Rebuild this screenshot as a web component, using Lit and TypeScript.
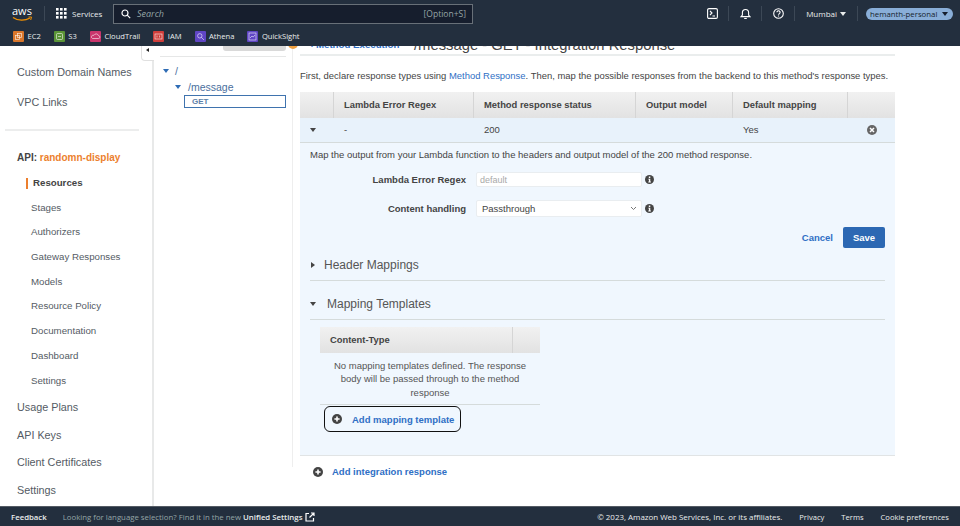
import { LitElement, html, css, svg } from 'lit';
import { customElement } from 'lit/decorators.js';

const favorites = [
  { name: 'EC2', color: '#d9762b', glyph: svg`<rect x="2.5" y="4.5" width="4" height="4"/><rect x="4.5" y="2.5" width="4" height="4"/>` },
  { name: 'S3', color: '#5a9437', glyph: svg`<rect x="2.5" y="2.5" width="6" height="6" rx="1"/><path d="M4 5.5h3"/>` },
  { name: 'CloudTrail', color: '#c9356c', glyph: svg`<path d="M2.5 7.5h6a1.4 1.4 0 0 0 0-2.8 2.4 2.4 0 0 0-4.5-.4 1.7 1.7 0 0 0-1.5 3.2z"/>` },
  { name: 'IAM', color: '#cf3d3a', glyph: svg`<rect x="2" y="3" width="7" height="5"/><path d="M4 4.5v2M6.5 4.5v2"/>` },
  { name: 'Athena', color: '#5f45c4', glyph: svg`<circle cx="4.8" cy="4.8" r="2.2"/><path d="M6.4 6.4 9 9"/>` },
  { name: 'QuickSight', color: '#5f45c4', glyph: svg`<rect x="2" y="2" width="7" height="7"/><path d="M3 7l2-2 1.2 1L8 4"/>` },
];

const apiLinks = ['Stages', 'Authorizers', 'Gateway Responses', 'Models', 'Resource Policy', 'Documentation', 'Dashboard', 'Settings'];
const bottomLinks = ['Usage Plans', 'API Keys', 'Client Certificates', 'Settings'];

const plusIcon = svg`<circle cx="5" cy="5" r="5" fill="#444"/><path d="M5 2.4v5.2M2.4 5h5.2" stroke="#fff" stroke-width="1.6"/>`;
const infoIcon = svg`<circle cx="4.5" cy="4.5" r="4.5" fill="#444"/><rect x="3.8" y="1.5" width="1.5" height="1.5" fill="#fff"/><path d="M3.3 3.8h2v2.8h.6v.8H3.3v-.8h.6v-2h-.6z" fill="#fff"/>`;

@customElement('app-root')
export class AppRoot extends LitElement {
  static styles = css`
    :host {
      display: flex;
      flex-direction: column;
      width: 960px;
      height: 526px;
      overflow: hidden;
      font-family: 'Liberation Sans', Arial, sans-serif;
      color: #444;
      background: #fff;
    }

    /* top bar */
    .topbar {
      flex: none;
      height: 46px;
      background: #232f3e;
      color: #eaeded;
      box-sizing: border-box;
      font-family: 'Open Sans', 'Noto Sans', sans-serif;
      position: relative;
      z-index: 1;
    }
    .nav {
      height: 27px;
      display: flex;
      align-items: center;
      padding: 0 7px 0 12px;
    }
    .logo {
      width: 22px;
      height: 19px;
      flex: none;
    }
    .sep {
      width: 1px;
      height: 15px;
      background: #3c4856;
      flex: none;
    }
    .sep.first {
      margin-left: 10px;
    }
    .services {
      display: flex;
      align-items: center;
      gap: 5px;
      margin-left: 11px;
      width: 57px;
      font-size: 8px;
      flex: none;
    }
    .search {
      width: 360px;
      height: 20px;
      box-sizing: border-box;
      background: #161e2d;
      border: 1px solid #687078;
      display: flex;
      align-items: center;
      padding: 0 6px 0 7px;
      gap: 6px;
      font-size: 8.5px;
      color: #95a5a6;
      flex: none;
    }
    .search em {
      flex: 1;
      font-size: 9px;
    }
    .nav-right {
      margin-left: auto;
      display: flex;
      align-items: center;
      font-size: 8px;
    }
    .ico {
      width: 32px;
      display: flex;
      justify-content: center;
    }
    .region {
      display: flex;
      align-items: center;
      gap: 3px;
      padding: 0 11px;
    }
    .caret {
      display: inline-block;
      width: 0;
      height: 0;
      border-left: 3px solid transparent;
      border-right: 3px solid transparent;
      border-top: 4px solid currentColor;
    }
    .account {
      margin-left: 8px;
      height: 12px;
      width: 87px;
      box-sizing: border-box;
      border-radius: 6px;
      background: #89aed8;
      color: #161e2d;
      display: flex;
      align-items: center;
      justify-content: space-between;
      padding: 0 5px 0 4px;
      font-size: 7.8px;
    }
    .favs {
      height: 18px;
      display: flex;
      align-items: center;
      padding-left: 13px;
      gap: 13px;
      font-size: 7.6px;
    }
    .fav {
      display: flex;
      align-items: center;
      gap: 3.5px;
    }
    .fav svg {
      display: block;
      width: 11px;
      height: 11px;
      border-radius: 1px;
      fill: none;
      stroke: #fff;
      stroke-width: 0.7;
      stroke-opacity: 0.8;
    }

    .main {
      flex: 1;
      min-height: 0;
      display: flex;
      align-items: flex-start;
      overflow: hidden;
    }

    /* side nav */
    .side {
      flex: none;
      width: 154px;
      height: 100%;
      box-sizing: border-box;
      border-right: 2px solid #e8e9e9;
      font-size: 10.8px;
      color: #545b64;
    }
    .side a {
      display: block;
      color: inherit;
    }
    .side .top {
      padding-left: 17px;
      height: 30px;
      line-height: 30px;
    }
    .side .top.cut {
      margin-top: -19px;
    }
    .side .big {
      padding-left: 17px;
      height: 27.6px;
      line-height: 18px;
    }
    .side hr {
      border: 0;
      border-top: 2px solid #eceded;
      margin: 12px 13px 19px 5px;
    }
    .api-title {
      padding-left: 17px;
      font-size: 10px;
      font-weight: 700;
      color: #444;
      height: 25px;
      line-height: 15px;
    }
    .api-title span {
      color: #ec7f2e;
    }
    .side .sub {
      height: 24.7px;
      line-height: 16px;
      padding-left: 31px;
      font-size: 9.7px;
    }
    .side .sub.on {
      font-weight: 700;
      color: #444;
      padding-left: 33px;
      position: relative;
    }
    .side .sub.on::before {
      content: '';
      position: absolute;
      left: 25.5px;
      top: 2.5px;
      width: 2px;
      height: 11px;
      background: #ec7f2e;
    }
    .side .gap {
      height: 1px;
    }

    /* resource tree */
    .tree {
      flex: none;
      width: 139px;
      height: 421px;
      box-sizing: border-box;
      border-right: 1px solid #eee;
      position: relative;
      font-size: 10.5px;
      color: #4a6f9e;
      padding: 0 6px 0 6px;
    }
    .tree-head {
      display: flex;
      justify-content: space-between;
      align-items: flex-start;
      height: 21px;
      box-sizing: border-box;
      margin-top: -10px;
      border-bottom: 1.5px solid #e6e7e7;
      font-size: 9.5px;
      font-weight: 700;
      line-height: 13px;
      color: #777;
    }
    .tree-head i {
      display: block;
      width: 63px;
      height: 15px;
      background: #d9d9d9;
      border-radius: 0 0 3px 3px;
    }
    .collapse {
      position: absolute;
      left: -13px;
      top: 0;
      width: 13px;
      height: 15px;
      box-sizing: border-box;
      background: #fff;
      border-left: 1px solid #e0e0e0;
      border-bottom: 1px solid #e0e0e0;
      border-radius: 0 0 0 4px;
    }
    .collapse::after {
      content: '';
      position: absolute;
      left: 4px;
      top: 2px;
      border-top: 2.5px solid transparent;
      border-bottom: 2.5px solid transparent;
      border-right: 3px solid #222;
    }
    .dot {
      position: absolute;
      right: -6px;
      top: -7px;
      width: 10px;
      height: 10px;
      border-radius: 50%;
      background: #f0a040;
    }
    .tree .row {
      display: flex;
      align-items: center;
      gap: 6px;
      height: 16px;
      padding-left: 3px;
    }
    .tree .row.root {
      margin-top: 6px;
    }
    .tree .row.deep {
      margin-left: 12px;
      gap: 7px;
    }
    .tree .caret {
      color: #2e6cb5;
    }
    .tree .get {
      margin-left: 24px;
      height: 13px;
      box-sizing: border-box;
      border: 1px solid #3f73ae;
      font-size: 8px;
      font-weight: 700;
      line-height: 11px;
      padding-left: 7px;
      color: #5d7fa8;
    }

    /* content */
    .content {
      flex: none;
      width: 595px;
      margin-left: 7px;
    }
    .title {
      display: flex;
      align-items: center;
      height: 20px;
      margin-top: -12px;
      padding-top: 1px;
      box-sizing: border-box;
      font-size: 14.8px;
      color: #444;
    }
    .back {
      width: 114px;
      flex: none;
      box-sizing: border-box;
      padding-left: 10px;
      font-size: 9.7px;
      font-weight: 700;
      color: #2f6fc5;
    }
    .rule {
      height: 2px;
      background: #eaeded;
    }
    .intro {
      font-size: 9.45px;
      line-height: 14px;
      margin: 13px 0 9px;
      white-space: nowrap;
      color: #444;
    }
    .link {
      color: #2f6fc5;
    }
    .grid {
      display: grid;
      grid-template-columns: 34px 140px 162px 97px 115px 47px;
    }
    .head {
      height: 26px;
      background: linear-gradient(#f1f1f1, #e2e2e2);
      border-right: 1px solid #d5d5d5;
      box-sizing: border-box;
      font-size: 9.4px;
      font-weight: 700;
      line-height: 26px;
      padding-left: 10px;
      color: #444;
    }
    .head.last {
      border-right: 0;
    }
    .cell {
      height: 25px;
      line-height: 24px;
      background: #e8f2fb;
      border-bottom: 1px solid #d5dbdb;
      box-sizing: border-box;
      font-size: 9.5px;
      padding-left: 10px;
    }
    .cell.del {
      padding-left: 19px;
    }
    .cell svg,
    .cell .caret {
      vertical-align: middle;
    }
    .detail {
      background: #f0f7fe;
      border-bottom: 1px solid #e1e4e5;
      height: 313px;
      box-sizing: border-box;
      padding: 5px 10px 0 10px;
    }
    .detail p {
      margin: 0;
      font-size: 9.5px;
      line-height: 14px;
    }
    .field {
      display: flex;
      align-items: center;
      gap: 3px;
      margin-top: 10px;
      height: 15px;
    }
    .field.tall {
      margin-top: 13px;
      height: 17px;
    }
    .field label {
      width: 156px;
      margin-right: 7px;
      text-align: right;
      font-size: 9.5px;
      font-weight: 700;
      color: #444;
    }
    .input {
      width: 166px;
      height: 100%;
      box-sizing: border-box;
      background: #fff;
      border: 1px solid #e9edf0;
      border-radius: 2px;
      display: flex;
      align-items: center;
      justify-content: space-between;
      padding: 0 4px 0 3px;
      font-size: 9px;
      color: #a9a9a9;
    }
    .input.sel {
      color: #444;
      padding-left: 5px;
      font-size: 9.5px;
    }
    .actions {
      display: flex;
      justify-content: flex-end;
      align-items: center;
      gap: 10px;
      margin-top: 10px;
      font-size: 9.5px;
      font-weight: 700;
    }
    .save {
      width: 42px;
      height: 21px;
      border-radius: 2px;
      background: #2c68b3;
      color: #fff;
      text-align: center;
      line-height: 21px;
    }
    .section {
      display: flex;
      align-items: center;
      gap: 8px;
      height: 31px;
      box-sizing: border-box;
      margin-top: 2px;
      font-size: 12px;
      color: #555;
      border-bottom: 1px solid #d5dbdb;
    }
    .section.open {
      margin-top: 8px;
      gap: 10px;
    }
    .section .tri {
      width: 0;
      height: 0;
      border-top: 3px solid transparent;
      border-bottom: 3px solid transparent;
      border-left: 4px solid #444;
      margin: 0 1px 0 1px;
    }
    .section .caret {
      color: #444;
      margin-right: 1px;
    }
    .mapping {
      width: 220px;
      margin: 7px 0 0 10px;
    }
    .mhead {
      display: grid;
      grid-template-columns: 193px 27px;
    }
    .mapping .note {
      text-align: center;
      font-size: 9.5px;
      line-height: 13.4px;
      padding: 6px 8px 5px;
      border-bottom: 1px solid #d5dbdb;
      color: #555;
    }
    .add {
      display: inline-flex;
      align-items: center;
      gap: 10px;
      font-size: 9.5px;
      font-weight: 700;
      color: #2f6fc5;
    }
    .add svg {
      width: 10px;
      height: 10px;
    }
    .mapping .add {
      margin: 1px 0 0 4px;
      width: 137px;
      height: 26px;
      box-sizing: border-box;
      border: 1.5px solid #111;
      border-radius: 6px;
      padding-left: 7px;
    }
    .add.outer {
      margin: 10px 0 0 13px;
      gap: 9px;
    }

    /* footer */
    .footer {
      flex: none;
      height: 20px;
      box-sizing: border-box;
      background: #232f3e;
      border-top: 1px solid #545b64;
      color: #eaeded;
      font-size: 7.8px;
      display: flex;
      align-items: center;
      padding: 0 11px;
      font-family: 'Open Sans', 'Noto Sans', sans-serif;
    }
    .footer b {
      font-weight: 600;
    }
    .footer .hint {
      margin-left: 16px;
      color: #95a5a6;
    }
    .footer .hint b {
      color: #eaeded;
    }
    .footer .ext {
      margin-left: 3px;
    }
    .footer .end {
      margin-left: auto;
      display: flex;
      gap: 17px;
      font-size: 7.6px;
    }
    .footer .copy {
      font-size: 7.95px;
    }
  `;

  private renderHeader() {
    return html`
      <div class="topbar">
        <div class="nav">
          <svg class="logo" viewBox="0 0 22 19">
            <text x="0" y="11" font-size="11" font-family="Open Sans" fill="#fff">aws</text>
            <path d="M1 13.5c5 3.5 12 3.5 17 .5" fill="none" stroke="#f29100" stroke-width="1.3"/>
            <path d="M16.5 13h3l-.8 3" fill="none" stroke="#f29100" stroke-width="1"/>
          </svg>
          <span class="sep first"></span>
          <div class="services">
            <svg width="11" height="11" viewBox="0 0 11 11" fill="#fff">
              ${[0, 4, 8].map((y) => [0, 4, 8].map((x) => svg`<rect x=${x} y=${y} width="2.6" height="2.6"/>`))}
            </svg>
            Services
          </div>
          <div class="search">
            <svg width="10" height="10" viewBox="0 0 10 10" fill="none" stroke="#fff" stroke-width="1.2">
              <circle cx="4" cy="4" r="3"/><path d="M6.2 6.2 9.2 9.2"/>
            </svg>
            <em>Search</em>
            <span>[Option+S]</span>
          </div>
          <div class="nav-right">
            <span class="ico">
              <svg width="11" height="11" viewBox="0 0 11 11" fill="none" stroke="#fff" stroke-width="1.1">
                <rect x=".6" y=".6" width="9.8" height="9.8" rx="1.4"/><path d="M3 3l2 2-2 2M5.5 8h2.5"/>
              </svg>
            </span>
            <span class="sep"></span>
            <span class="ico">
              <svg width="11" height="12" viewBox="0 0 11 12" fill="none" stroke="#fff" stroke-width="1.1">
                <path d="M1 8.6h9L8.6 7V4.6a3.1 3.1 0 0 0-6.2 0V7zM4.2 10.5h2.6"/>
              </svg>
            </span>
            <span class="sep"></span>
            <span class="ico">
              <svg width="11" height="11" viewBox="0 0 11 11" fill="none" stroke="#fff" stroke-width="1.1">
                <circle cx="5.5" cy="5.5" r="4.8"/><path d="M3.9 4.3a1.6 1.6 0 1 1 2.4 1.4c-.6.3-.8.6-.8 1.1M5.5 7.6v1"/>
              </svg>
            </span>
            <span class="sep"></span>
            <div class="region">Mumbai <span class="caret"></span></div>
            <span class="sep"></span>
            <div class="account">hemanth-personal <span class="caret"></span></div>
          </div>
        </div>
        <div class="favs">
          ${favorites.map(
            (f) => html`<div class="fav">
              <svg viewBox="0 0 11 11" style="background:${f.color}">${f.glyph}</svg>${f.name}
            </div>`,
          )}
        </div>
      </div>
    `;
  }

  private renderSide() {
    return html`
      <nav class="side">
        <a class="top cut">APIs</a>
        <a class="top">Custom Domain Names</a>
        <a class="top">VPC Links</a>
        <hr />
        <div class="api-title">API: <span>randomn-display</span></div>
        <a class="sub on">Resources</a>
        ${apiLinks.map((l) => html`<a class="sub">${l}</a>`)}
        <div class="gap"></div>
        ${bottomLinks.map((l) => html`<a class="big">${l}</a>`)}
      </nav>
    `;
  }

  private renderTree() {
    return html`
      <div class="tree">
        <span class="collapse"></span>
        <span class="dot"></span>
        <div class="tree-head">Resources<i></i></div>
        <div class="row root"><span class="caret"></span>/</div>
        <div class="row deep"><span class="caret"></span>/message</div>
        <div class="get">GET</div>
      </div>
    `;
  }

  private renderContent() {
    return html`
      <section class="content">
        <div class="title">
          <span class="back">‹ Method Execution</span>
          /message - GET - Integration Response
        </div>
        <div class="rule"></div>
        <div class="intro">
          First, declare response types using <span class="link">Method Response</span>. Then, map the possible
          responses from the backend to this method's response types.
        </div>
        <div class="grid">
          <div class="head"></div>
          <div class="head">Lambda Error Regex</div>
          <div class="head">Method response status</div>
          <div class="head">Output model</div>
          <div class="head">Default mapping</div>
          <div class="head last"></div>
          <div class="cell"><span class="caret"></span></div>
          <div class="cell">-</div>
          <div class="cell">200</div>
          <div class="cell"></div>
          <div class="cell">Yes</div>
          <div class="cell del">
            <svg width="10" height="10" viewBox="0 0 10 10">
              <circle cx="5" cy="5" r="5" fill="#666"/>
              <path d="M3 3l4 4M7 3l-4 4" stroke="#fff" stroke-width="1.5"/>
            </svg>
          </div>
        </div>
        <div class="detail">
          <p>Map the output from your Lambda function to the headers and output model of the 200 method response.</p>
          <div class="field">
            <label>Lambda Error Regex</label>
            <div class="input">default</div>
            <svg width="9" height="9" viewBox="0 0 9 9">${infoIcon}</svg>
          </div>
          <div class="field tall">
            <label>Content handling</label>
            <div class="input sel">
              Passthrough
              <svg width="7" height="5" viewBox="0 0 7 5" fill="none" stroke="#777"><path d="M1 1l2.5 2.5L6 1"/></svg>
            </div>
            <svg width="9" height="9" viewBox="0 0 9 9">${infoIcon}</svg>
          </div>
          <div class="actions"><span class="link">Cancel</span><span class="save">Save</span></div>
          <div class="section"><span class="tri"></span>Header Mappings</div>
          <div class="section open"><span class="caret"></span>Mapping Templates</div>
          <div class="mapping">
            <div class="mhead">
              <div class="head">Content-Type</div>
              <div class="head last"></div>
            </div>
            <div class="note">No mapping templates defined. The response body will be passed through to the method response</div>
            <div class="add"><svg viewBox="0 0 10 10">${plusIcon}</svg>Add mapping template</div>
          </div>
        </div>
        <div class="add outer"><svg viewBox="0 0 10 10">${plusIcon}</svg>Add integration response</div>
      </section>
    `;
  }

  render() {
    return html`
      ${this.renderHeader()}
      <div class="main">
        ${this.renderSide()}
        ${this.renderTree()}
        ${this.renderContent()}
      </div>
      <footer class="footer">
        <b>Feedback</b>
        <span class="hint">Looking for language selection? Find it in the new <b>Unified Settings</b></span>
        <svg class="ext" width="10" height="10" viewBox="0 0 10 10" fill="none" stroke="#fff" stroke-width="1.2">
          <path d="M4 1.5H1v7.5h7.5V6M4.5 5.5 9 1M6 1h3v3"/>
        </svg>
        <div class="end">
          <span class="copy">© 2023, Amazon Web Services, Inc. or its affiliates.</span>
          <span>Privacy</span>
          <span>Terms</span>
          <span>Cookie preferences</span>
        </div>
      </footer>
    `;
  }
}
